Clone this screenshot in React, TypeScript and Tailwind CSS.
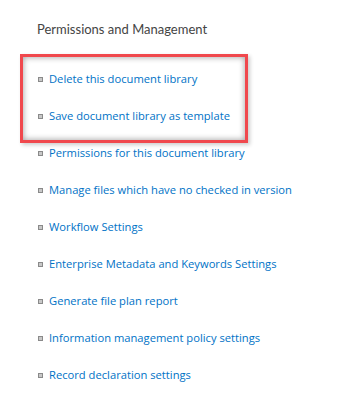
import React from 'react';

const boxed = ['Delete this document library', 'Save document library as template'];

const rest = [
  'Permissions for this document library',
  'Manage files which have no checked in version',
  'Workflow Settings',
  'Enterprise Metadata and Keywords Settings',
  'Generate file plan report',
  'Information management policy settings',
  'Record declaration settings',
];

const Item: React.FC<{ label: string }> = ({ label }) => (
  <li className="flex items-center h-[18px] gap-[6px]">
    <span className="w-[5px] h-[5px] border border-[#8a8a8a] bg-[#c8c8c8] shrink-0" />
    <a href="#" className="text-[#0072c6] font-['Open_Sans',sans-serif] text-[11.2px] leading-[18px] whitespace-nowrap">
      {label}
    </a>
  </li>
);

export default function App() {
  return (
    <div className="w-[357px] h-[395px] bg-white pl-[20px] pt-[20px] font-['Lato',sans-serif]">
      <h3 className="pl-[17px] text-[13px] leading-[18px] text-[#444] mb-[16px]">Permissions and Management</h3>

      {/* highlighted group */}
      <div className="w-[228px] border-[3px] border-[#f0484d] pl-[15px] pt-[13px] pb-[15px] shadow-[inset_0_0_6px_rgba(0,0,0,0.4),2px_2px_4px_rgba(0,0,0,0.2)]">
        <ul className="flex flex-col gap-[19px]">
          {boxed.map((l) => (
            <Item key={l} label={l} />
          ))}
        </ul>
      </div>

      <ul className="flex flex-col gap-[19px] mt-[1px] pl-[18px]">
        {rest.map((l) => (
          <Item key={l} label={l} />
        ))}
      </ul>
    </div>
  );
}
